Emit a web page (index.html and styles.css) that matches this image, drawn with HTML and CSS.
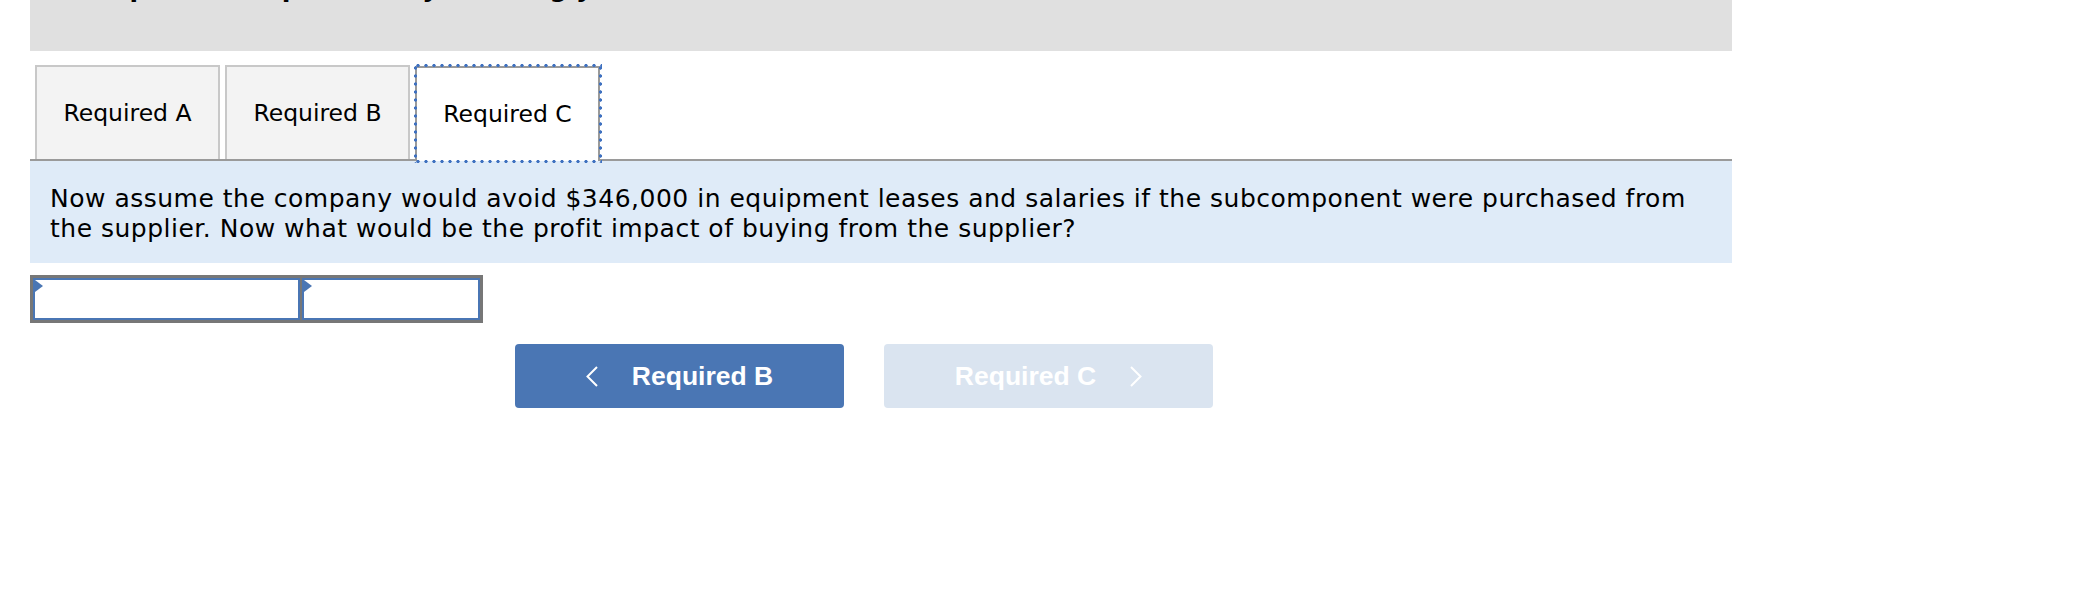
FILE: index.html
```html
<!DOCTYPE html>
<html lang="en">
<head>
<meta charset="utf-8">
<title>Required C</title>
<link rel="stylesheet" href="styles.css">
</head>
<body>
<div class="page">
  <div class="instructions">
    <p class="instructions-text">Complete this question by entering your answers in the tabs below.</p>
  </div>

  <div class="tabs">
    <div class="tab">Required A</div>
    <div class="tab">Required B</div>
    <div class="tab active">Required C</div>
  </div>

  <div class="question">
    Now assume the company would avoid $346,000 in equipment leases and salaries if the subcomponent were purchased from the supplier. Now what would be the profit impact of buying from the supplier?
  </div>

  <div class="answer-row">
    <div class="answer">
      <div class="cell cell-wide"><span class="flag"></span></div>
      <div class="cell cell-narrow"><span class="flag"></span></div>
    </div>
  </div>

  <div class="nav">
    <div class="btn btn-prev">
      <svg class="chev" width="12" height="21" viewBox="0 0 12 21"><polyline points="11,1 1.5,10.5 11,20" fill="none" stroke="#fff" stroke-width="2"/></svg>
      <span>Required B</span>
    </div>
    <div class="btn btn-next">
      <span>Required C</span>
      <svg class="chev" width="12" height="21" viewBox="0 0 12 21"><polyline points="1,1 10.5,10.5 1,20" fill="none" stroke="#fff" stroke-width="2"/></svg>
    </div>
  </div>
</div>
</body>
</html>
```

FILE: styles.css
```css
html, body {
  margin: 0;
  padding: 0;
  background: #fff;
}

body {
  font-family: "DejaVu Sans", Verdana, sans-serif;
  color: #000;
}

.page {
  margin-left: 30px;
  width: 1702px;
}

.instructions {
  display: flow-root;
  background: #e0e0e0;
  height: 51px;
  padding-left: 38px;
}

.instructions-text {
  margin: -26px 0 0;
  font-weight: bold;
  font-size: 25px;
  line-height: 30px;
  white-space: nowrap;
}

.tabs {
  margin-top: 14px;
  display: flex;
  align-items: flex-end;
  gap: 5px;
  padding-left: 5px;
  height: 94px;
  border-bottom: 2px solid #9a9a9a;
}

.tab {
  box-sizing: border-box;
  width: 185px;
  height: 94px;
  border: 2px solid #c8c8c8;
  border-bottom: none;
  background: #f3f3f3;
  display: flex;
  align-items: center;
  justify-content: center;
  font-size: 23.5px;
}

.tab.active {
  position: relative;
  height: 95px;
  margin-bottom: -2px;
  padding-bottom: 1px;
  background: #fff;
  border-color: #9a9a9a;
}

.tab.active::after {
  content: "";
  position: absolute;
  top: -4px;
  left: -3px;
  right: -4px;
  bottom: -2px;
  pointer-events: none;
  background:
    radial-gradient(circle, #3f71c0 0 1.4px, transparent 1.9px) left top / 8px 3px repeat-x,
    radial-gradient(circle, #3f71c0 0 1.4px, transparent 1.9px) left bottom / 8px 3px repeat-x,
    radial-gradient(circle, #3f71c0 0 1.4px, transparent 1.9px) left top / 3px 8px repeat-y,
    radial-gradient(circle, #3f71c0 0 1.4px, transparent 1.9px) right top / 3px 8px repeat-y;
}

.question {
  background: #dfebf8;
  padding: 23px 20px 19px;
  font-size: 25px;
  letter-spacing: 0.5px;
  line-height: 30px;
}

.answer-row {
  margin-top: 12px;
}

.answer {
  display: inline-flex;
  gap: 2px;
  border: 3px solid #777;
  background: #777;
}

.cell {
  box-sizing: border-box;
  height: 42px;
  border: 2px solid #4a76b4;
  background: #fff;
  position: relative;
}

.cell-wide {
  width: 267px;
}

.cell-narrow {
  width: 178px;
}

.flag {
  position: absolute;
  left: 0;
  top: 0;
  width: 0;
  height: 0;
  border-left: 8px solid #4a76b4;
  border-top: 6px solid transparent;
  border-bottom: 6px solid transparent;
}

.nav {
  margin-top: 20px;
  display: flex;
  gap: 40px;
  padding-left: 485px;
}

.btn {
  box-sizing: border-box;
  width: 329px;
  height: 64px;
  border-radius: 4px;
  display: flex;
  align-items: center;
  justify-content: center;
  gap: 34px;
  font-family: "Liberation Sans", Arial, sans-serif;
  font-weight: bold;
  font-size: 26.5px;
  color: #fff;
}

.btn-prev {
  background: #4a76b4;
}

.btn-next {
  background: #dae4f0;
}

.chev {
  display: block;
}
```
